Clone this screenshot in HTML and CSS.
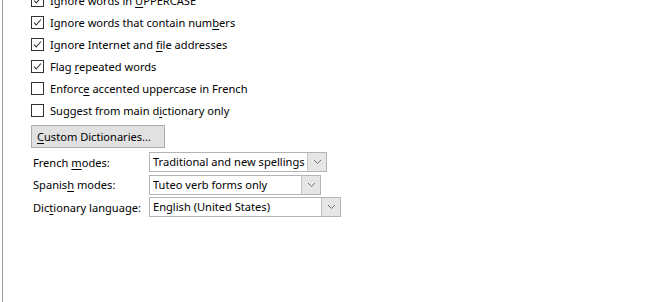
FILE: index.html
```html
<!DOCTYPE html>
<html lang="en">
<head>
    <meta charset="UTF-8">
    <title>Proofing Options</title>
    <link rel="stylesheet" href="styles.css">
</head>
<body>
    <div class="panel">

        <!-- Spelling options -->
        <div class="checks">
            <label class="check-row"><span class="box checked"><svg viewBox="0 0 13 13"><polyline points="2.5,6.5 5,9.5 10.5,3"/></svg></span><span>Ignore words in <u>U</u>PPERCASE</span></label>
            <label class="check-row"><span class="box checked"><svg viewBox="0 0 13 13"><polyline points="2.5,6.5 5,9.5 10.5,3"/></svg></span><span>Ignore words that contain num<u>b</u>ers</span></label>
            <label class="check-row"><span class="box checked"><svg viewBox="0 0 13 13"><polyline points="2.5,6.5 5,9.5 10.5,3"/></svg></span><span>Ignore Internet and <u>f</u>ile addresses</span></label>
            <label class="check-row"><span class="box checked"><svg viewBox="0 0 13 13"><polyline points="2.5,6.5 5,9.5 10.5,3"/></svg></span><span>Flag <u>r</u>epeated words</span></label>
            <label class="check-row"><span class="box"></span><span>Enforc<u>e</u> accented uppercase in French</span></label>
            <label class="check-row"><span class="box"></span><span>Suggest from main d<u>i</u>ctionary only</span></label>
        </div>

        <button class="dict-button"><u>C</u>ustom Dictionaries...</button>

        <!-- Language modes -->
        <div class="modes">
            <div class="mode-row">
                <span class="mode-label">French <u>m</u>odes:</span>
                <div class="combo combo-french">
                    <span class="combo-text">Traditional and new spellings</span>
                    <span class="combo-arrow"><svg viewBox="0 0 9 6"><polyline points="1,1 4.5,4.5 8,1"/></svg></span>
                </div>
            </div>
            <div class="mode-row">
                <span class="mode-label">Spanis<u>h</u> modes:</span>
                <div class="combo combo-spanish">
                    <span class="combo-text">Tuteo verb forms only</span>
                    <span class="combo-arrow"><svg viewBox="0 0 9 6"><polyline points="1,1 4.5,4.5 8,1"/></svg></span>
                </div>
            </div>
            <div class="mode-row">
                <span class="mode-label">Dic<u>t</u>ionary language:</span>
                <div class="combo combo-lang">
                    <span class="combo-text">English (United States)</span>
                    <span class="combo-arrow"><svg viewBox="0 0 9 6"><polyline points="1,1 4.5,4.5 8,1"/></svg></span>
                </div>
            </div>
        </div>
    </div>
</body>
</html>
```

FILE: styles.css
```css
/* Proofing dialog */
html, body {
    height: 100%;
}
body {
    margin: 0;
    background: #ffffff;
    font-family: "Noto Sans", "Open Sans", sans-serif;
    font-size: 11.1px;
    color: #000000;
    overflow: hidden;
}
u {
    text-decoration-thickness: 1px;
    text-underline-offset: 2px;
}

.panel {
    display: flow-root;
    box-sizing: border-box;
    height: 100%;
    margin-left: 2px;
    border-left: 1px solid #a0a0a0;
    padding-left: 28px;
}

/* Checkboxes */
.checks {
    margin-top: -11px;
}
.check-row {
    display: flex;
    align-items: center;
    height: 22px;
    white-space: nowrap;
}
.box {
    width: 11px;
    height: 11px;
    border: 1px solid #333333;
    margin-right: 6px;
    display: flex;
}
.box svg {
    width: 11px;
    height: 11px;
    fill: none;
    stroke: #222222;
    stroke-width: 1.2;
}

/* Button */
.dict-button {
    display: block;
    margin-top: 4px;
    width: 134px;
    height: 23px;
    padding: 0 0 0 5px;
    text-align: left;
    font: inherit;
    color: #000000;
    background-color: #e1e1e1;
    border: 1px solid #adadad;
}

/* Modes */
.modes {
    margin-top: 4px;
    display: flex;
    flex-direction: column;
    gap: 2.5px;
}
.mode-row {
    display: flex;
    align-items: center;
    height: 20px;
}
.mode-label {
    width: 116px;
    padding-left: 2px;
    white-space: nowrap;
}
.combo {
    display: flex;
    height: 20px;
    box-sizing: border-box;
    border: 1px solid #b4b4b4;
    background: #ffffff;
}
.combo-french { width: 178px; }
.combo-spanish { width: 172px; }
.combo-lang { width: 192px; }
.combo-text {
    flex: 1;
    padding-left: 3px;
    line-height: 18px;
    white-space: nowrap;
    overflow: hidden;
}
.combo-arrow {
    width: 18px;
    display: flex;
    align-items: center;
    justify-content: center;
    background: #e6e6e6;
    border-left: 1px solid #c4c4c4;
}
.combo-arrow svg {
    width: 9px;
    height: 6px;
    fill: none;
    stroke: #707070;
    stroke-width: 1;
}
```
